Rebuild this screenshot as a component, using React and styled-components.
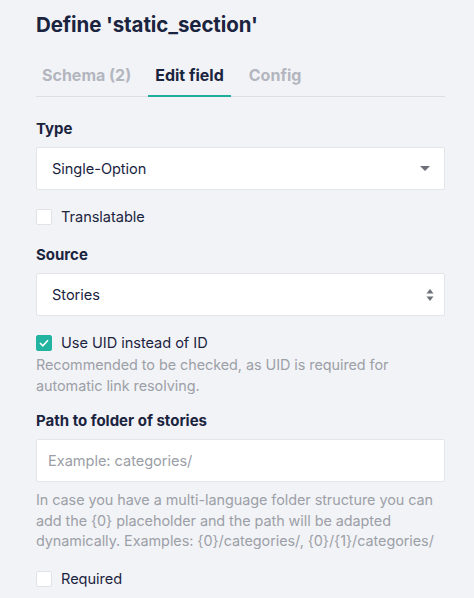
import styled, { createGlobalStyle } from "styled-components";

const GlobalStyle = createGlobalStyle`
  html, body {
    margin: 0;
    padding: 0;
    background: #f2f3f6;
  }
  body {
    font-family: Inter, "Noto Sans", sans-serif;
    color: #1b243f;
    -webkit-font-smoothing: antialiased;
  }
`;

const Panel = styled.div`
  width: 474px;
  height: 598px;
  box-sizing: border-box;
  padding: 12px 29px 0 36px;
  overflow: hidden;
`;

const Title = styled.h1`
  margin: 0;
  font-size: 20.5px;
  font-weight: 700;
  line-height: 26px;
  letter-spacing: -0.1px;
  color: #1b243f;
`;

const Tabs = styled.div`
  display: flex;
  margin-top: 26px;
  border-bottom: 1px solid #dcdee4;
`;

const Tab = styled.div`
  padding: 0 7px 9px;
  margin-right: ${(p) => (p.$active ? "11px" : "10px")};
  font-size: 16px;
  font-weight: 700;
  line-height: 22px;
  color: ${(p) => (p.$active ? "#1b243f" : "#b3b6bf")};
  border-bottom: 2px solid ${(p) => (p.$active ? "#1fae9b" : "transparent")};
  margin-bottom: -1px;
  &:first-child {
    padding-left: 6px;
  }
`;

const Form = styled.div`
  display: flex;
  flex-direction: column;
  padding-top: 22px;
`;

const Label = styled.div`
  font-size: 15px;
  font-weight: 700;
  line-height: 20px;
  color: #1b243f;
  margin-bottom: 8px;
`;

const Field = styled.div`
  display: flex;
  align-items: center;
  justify-content: space-between;
  height: 43px;
  box-sizing: border-box;
  background: #fff;
  border: 1px solid #e3e5ea;
  border-radius: 2px;
  padding: 0 ${(p) => (p.$arrows ? "10px" : "14px")} 0 ${(p) => (p.$placeholder ? "11px" : "15px")};
  font-size: 14.6px;
  letter-spacing: -0.05px;
  color: ${(p) => (p.$placeholder ? "#9a9ea6" : "#1b243f")};
`;

const CheckRow = styled.label`
  display: flex;
  align-items: center;
  gap: 9px;
  font-size: 14.6px;
  letter-spacing: -0.05px;
  line-height: 20px;
  color: #1b243f;
  margin-top: ${(p) => p.$top || "17px"};
`;

const Box = styled.span`
  width: 16px;
  height: 16px;
  box-sizing: border-box;
  border-radius: 2px;
  border: 1px solid ${(p) => (p.$checked ? "#22b3a1" : "#e0e2e7")};
  background: ${(p) => (p.$checked ? "#22b3a1" : "#fff")};
  display: flex;
  align-items: center;
  justify-content: center;
`;

const Help = styled.div`
  font-size: 14.4px;
  letter-spacing: -0.05px;
  line-height: 20.5px;
  color: #9ca0a8;
  margin-top: ${(p) => p.$top || "2px"};
`;

const Group = styled.div`
  margin-top: ${(p) => p.$top || "0"};
`;

const Caret = () => (
  <svg width="10" height="6" viewBox="0 0 10 6">
    <path d="M0 0h10L5 5z" fill="#6d7079" />
  </svg>
);

const Arrows = () => (
  <svg width="8" height="14" viewBox="0 0 8 14">
    <path d="M4 1l3.5 4.5h-7z" fill="#6d7079" />
    <path d="M4 13L0.5 8.5h7z" fill="#6d7079" />
  </svg>
);

const Check = () => (
  <svg width="10" height="8" viewBox="0 0 10 8">
    <path d="M1 4l2.8 2.8L9 1.2" fill="none" stroke="#fff" strokeWidth="1.6" />
  </svg>
);

const pathHelp =
  "In case you have a multi-language folder structure you can add the {0} placeholder and the path will be adapted dynamically. Examples: {0}/categories/, {0}/{1}/categories/";

export default function App() {
  return (
    <>
      <GlobalStyle />
      <Panel>
        <Title>Define 'static_section'</Title>
        <Tabs>
          <Tab>Schema (2)</Tab>
          <Tab $active>Edit field</Tab>
          <Tab>Config</Tab>
        </Tabs>
        <Form>
          <Group>
            <Label>Type</Label>
            <Field>
              <span>Single-Option</span>
              <Caret />
            </Field>
          </Group>
          <CheckRow>
            <Box />
            Translatable
          </CheckRow>
          <Group $top="18px">
            <Label>Source</Label>
            <Field $arrows>
              <span>Stories</span>
              <Arrows />
            </Field>
          </Group>
          <CheckRow $top="17px">
            <Box $checked>
              <Check />
            </Box>
            Use UID instead of ID
          </CheckRow>
          <Help>
            Recommended to be checked, as UID is required for automatic link
            resolving.
          </Help>
          <Group $top="15px">
            <Label>Path to folder of stories</Label>
            <Field $placeholder>
              <span>Example: categories/</span>
            </Field>
          </Group>
          <Help $top="8px">{pathHelp}</Help>
          <CheckRow $top="17px">
            <Box />
            Required
          </CheckRow>
        </Form>
      </Panel>
    </>
  );
}
